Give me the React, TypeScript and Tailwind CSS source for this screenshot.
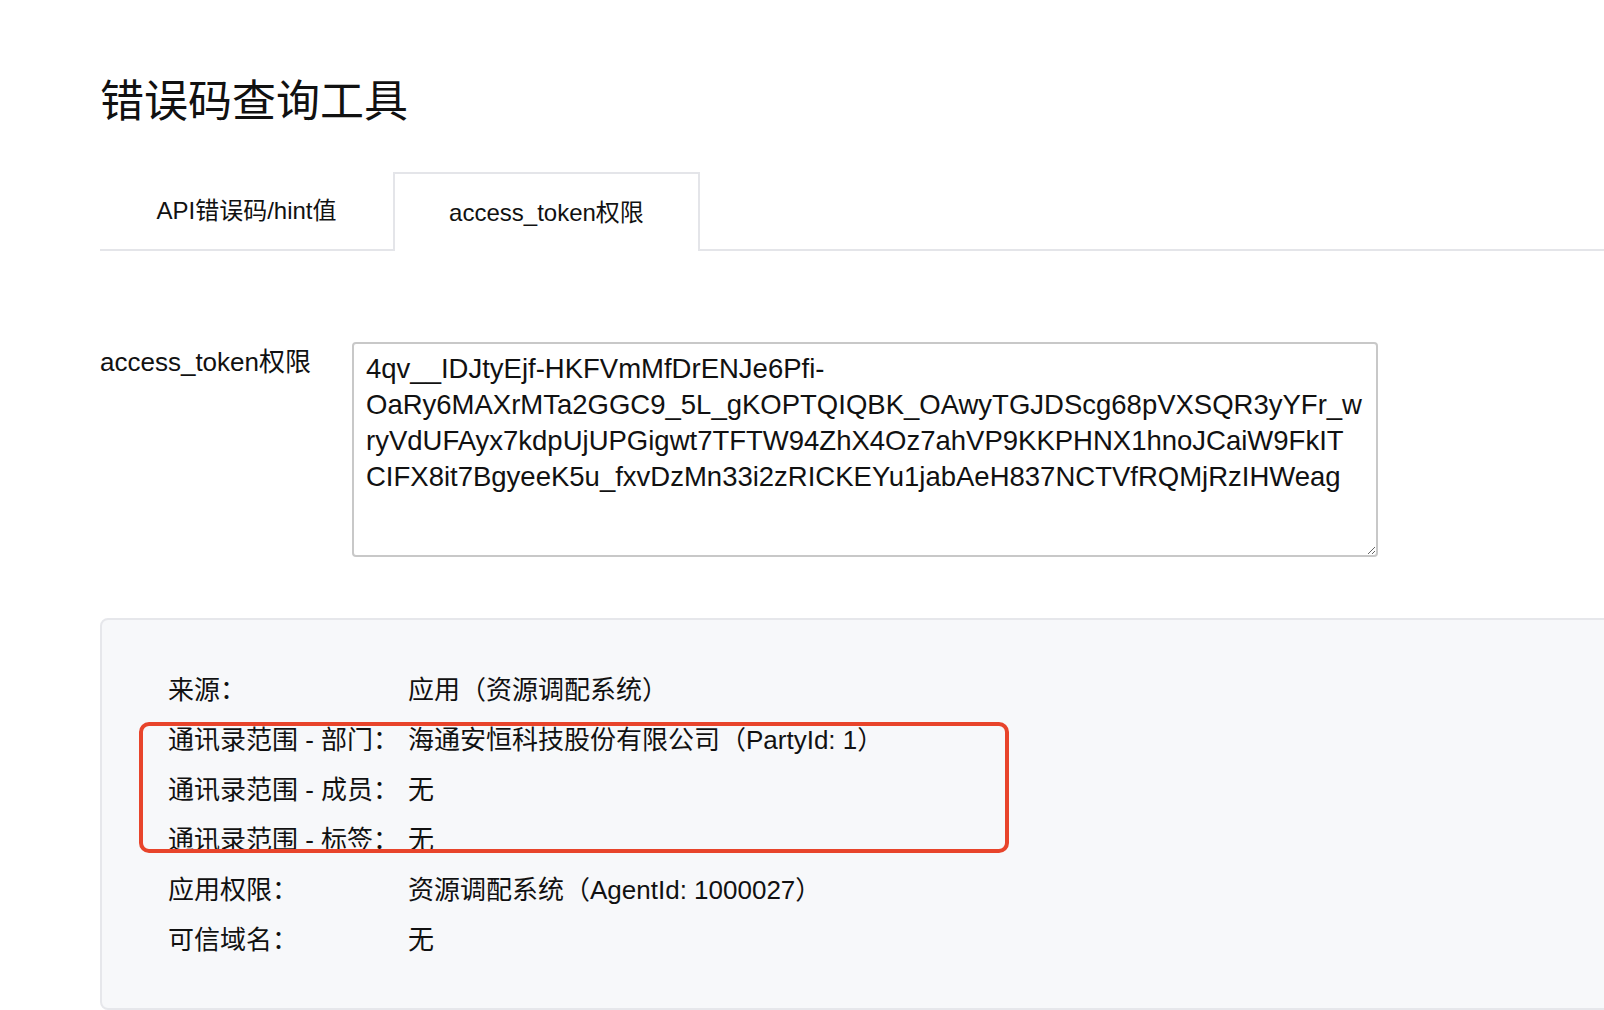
import { useState } from 'react';

// 按截图中的换行位置拆分
const tokenLines = [
  '4qv__IDJtyEjf-HKFVmMfDrENJe6Pfi-',
  'OaRy6MAXrMTa2GGC9_5L_gKOPTQIQBK_OAwyTGJDScg68pVXSQR3yYFr_w',
  'ryVdUFAyx7kdpUjUPGigwt7TFTW94ZhX4Oz7ahVP9KKPHNX1hnoJCaiW9FkIT',
  'CIFX8it7BgyeeK5u_fxvDzMn33i2zRICKEYu1jabAeH837NCTVfRQMjRzIHWeag',
];

const rows: [string, string][] = [
  ['来源：', '应用（资源调配系统）'],
  ['通讯录范围 - 部门：', '海通安恒科技股份有限公司（PartyId: 1）'],
  ['通讯录范围 - 成员：', '无'],
  ['通讯录范围 - 标签：', '无'],
  ['应用权限：', '资源调配系统（AgentId: 1000027）'],
  ['可信域名：', '无'],
];

const tabs = [
  { id: 'hint', name: 'API错误码/hint值', width: 'w-[293px]' },
  { id: 'token', name: 'access_token权限', width: 'w-[307px]' },
];

export default function App() {
  const [active, setActive] = useState('token');

  return (
    <div className="h-[1010px] w-[1604px] overflow-hidden bg-white text-[#111] font-['Liberation_Sans','Noto_Sans_CJK_SC',sans-serif]">
      <div className="pl-[100px] pt-[72px]">
        {/* 标题 */}
        <h1 className="text-[44px] leading-[60px] font-normal">错误码查询工具</h1>

        {/* 标签页 */}
        <div className="mt-[40px] flex border-b-2 border-[#e4e5e9]">
          {tabs.map((tab) => {
            const isActive = tab.id === active;
            return (
              <button
                key={tab.id}
                type="button"
                onClick={() => setActive(tab.id)}
                className={`${tab.width} text-[24px] leading-[32px] ${
                  isActive
                    ? 'h-[79px] -mb-[2px] border-2 border-b-0 border-[#e4e5e9] bg-white'
                    : 'h-[77px]'
                }`}
              >
                {tab.name}
              </button>
            );
          })}
        </div>

        {/* 输入 */}
        <div className="mt-[91px] flex">
          <label className="w-[252px] shrink-0 text-[26px] leading-[40px]">access_token权限</label>
          <textarea
            readOnly
            spellCheck={false}
            defaultValue={tokenLines.join('\n')}
            className="h-[215px] w-[1026px] rounded-[4px] border-2 border-[#c8c8c8] pt-[7px] pl-[12px] pr-[8px] text-[27.5px] leading-[36px] text-[#111] outline-none"
          />
        </div>

        {/* 结果 */}
        <div className="relative mt-[61px] h-[392px] w-[1560px] rounded-[8px] border-2 border-[#e6e7eb] bg-[#f7f8fa] pt-[45px] pl-[66px]">
          {rows.map(([label, value]) => (
            <div key={label} className="flex text-[26px] leading-[50px]">
              <div className="w-[240px] shrink-0">{label}</div>
              <div>{value}</div>
            </div>
          ))}
          <div className="absolute left-[37px] top-[102px] h-[131px] w-[870px] rounded-[10px] border-4 border-[#e8442b]" />
        </div>
      </div>
    </div>
  );
}
